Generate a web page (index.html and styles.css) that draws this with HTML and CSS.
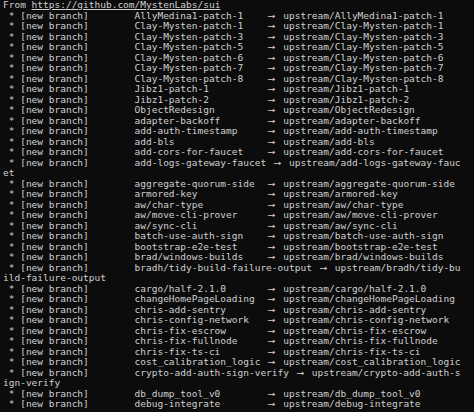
FILE: index.html
```html
<!DOCTYPE html>
<html>
<head>
<meta charset="utf-8">
<link rel="stylesheet" href="styles.css">
</head>
<body>
<div class="term">
<div class="ln">From <span class="url">https://github.com/MystenLabs/sui</span></div>
<div class="ln"> * [new branch]        AllyMedina1-patch-1    <span class="ar">→</span> upstream/AllyMedina1-patch-1</div>
<div class="ln"> * [new branch]        Clay-Mysten-patch-1    <span class="ar">→</span> upstream/Clay-Mysten-patch-1</div>
<div class="ln"> * [new branch]        Clay-Mysten-patch-3    <span class="ar">→</span> upstream/Clay-Mysten-patch-3</div>
<div class="ln"> * [new branch]        Clay-Mysten-patch-5    <span class="ar">→</span> upstream/Clay-Mysten-patch-5</div>
<div class="ln"> * [new branch]        Clay-Mysten-patch-6    <span class="ar">→</span> upstream/Clay-Mysten-patch-6</div>
<div class="ln"> * [new branch]        Clay-Mysten-patch-7    <span class="ar">→</span> upstream/Clay-Mysten-patch-7</div>
<div class="ln"> * [new branch]        Clay-Mysten-patch-8    <span class="ar">→</span> upstream/Clay-Mysten-patch-8</div>
<div class="ln"> * [new branch]        Jibz1-patch-1          <span class="ar">→</span> upstream/Jibz1-patch-1</div>
<div class="ln"> * [new branch]        Jibz1-patch-2          <span class="ar">→</span> upstream/Jibz1-patch-2</div>
<div class="ln"> * [new branch]        ObjectRedesign         <span class="ar">→</span> upstream/ObjectRedesign</div>
<div class="ln"> * [new branch]        adapter-backoff        <span class="ar">→</span> upstream/adapter-backoff</div>
<div class="ln"> * [new branch]        add-auth-timestamp     <span class="ar">→</span> upstream/add-auth-timestamp</div>
<div class="ln"> * [new branch]        add-bls                <span class="ar">→</span> upstream/add-bls</div>
<div class="ln"> * [new branch]        add-cors-for-faucet    <span class="ar">→</span> upstream/add-cors-for-faucet</div>
<div class="ln"> * [new branch]        add-logs-gateway-faucet <span class="ar">→</span> upstream/add-logs-gateway-fauc</div>
<div class="ln">et</div>
<div class="ln"> * [new branch]        aggregate-quorum-side  <span class="ar">→</span> upstream/aggregate-quorum-side</div>
<div class="ln"> * [new branch]        armored-key            <span class="ar">→</span> upstream/armored-key</div>
<div class="ln"> * [new branch]        aw/char-type           <span class="ar">→</span> upstream/aw/char-type</div>
<div class="ln"> * [new branch]        aw/move-cli-prover     <span class="ar">→</span> upstream/aw/move-cli-prover</div>
<div class="ln"> * [new branch]        aw/sync-cli            <span class="ar">→</span> upstream/aw/sync-cli</div>
<div class="ln"> * [new branch]        batch-use-auth-sign    <span class="ar">→</span> upstream/batch-use-auth-sign</div>
<div class="ln"> * [new branch]        bootstrap-e2e-test     <span class="ar">→</span> upstream/bootstrap-e2e-test</div>
<div class="ln"> * [new branch]        brad/windows-builds    <span class="ar">→</span> upstream/brad/windows-builds</div>
<div class="ln"> * [new branch]        bradh/tidy-build-failure-output <span class="ar">→</span> upstream/bradh/tidy-bu</div>
<div class="ln">ild-failure-output</div>
<div class="ln"> * [new branch]        cargo/half-2.1.0       <span class="ar">→</span> upstream/cargo/half-2.1.0</div>
<div class="ln"> * [new branch]        changeHomePageLoading  <span class="ar">→</span> upstream/changeHomePageLoading</div>
<div class="ln"> * [new branch]        chris-add-sentry       <span class="ar">→</span> upstream/chris-add-sentry</div>
<div class="ln"> * [new branch]        chris-config-network   <span class="ar">→</span> upstream/chris-config-network</div>
<div class="ln"> * [new branch]        chris-fix-escrow       <span class="ar">→</span> upstream/chris-fix-escrow</div>
<div class="ln"> * [new branch]        chris-fix-fullnode     <span class="ar">→</span> upstream/chris-fix-fullnode</div>
<div class="ln"> * [new branch]        chris-fix-ts-ci        <span class="ar">→</span> upstream/chris-fix-ts-ci</div>
<div class="ln"> * [new branch]        cost_calibration_logic <span class="ar">→</span> upstream/cost_calibration_logic</div>
<div class="ln"> * [new branch]        crypto-add-auth-sign-verify <span class="ar">→</span> upstream/crypto-add-auth-s</div>
<div class="ln">ign-verify</div>
<div class="ln"> * [new branch]        db_dump_tool_v0        <span class="ar">→</span> upstream/db_dump_tool_v0</div>
<div class="ln"> * [new branch]        debug-integrate        <span class="ar">→</span> upstream/debug-integrate</div>
</div>
</body>
</html>
```
FILE: styles.css
```css
html, body {
  margin: 0;
  padding: 0;
  background: #0c0c0c;
  height: 100%;
  overflow: hidden;
}
.term {
  padding-left: 3px;
  font-family: "DejaVu Sans Mono", monospace;
  font-size: 9.5px;
  line-height: 10.5px;
  color: #d0d0d0;
}
.ln {
  white-space: pre;
  height: 10.5px;
}
.url {
  text-decoration: underline;
}
.ar {
  display: inline-block;
  width: 2ch;
  text-align: center;
  transform: scaleX(1.4);
}
```
